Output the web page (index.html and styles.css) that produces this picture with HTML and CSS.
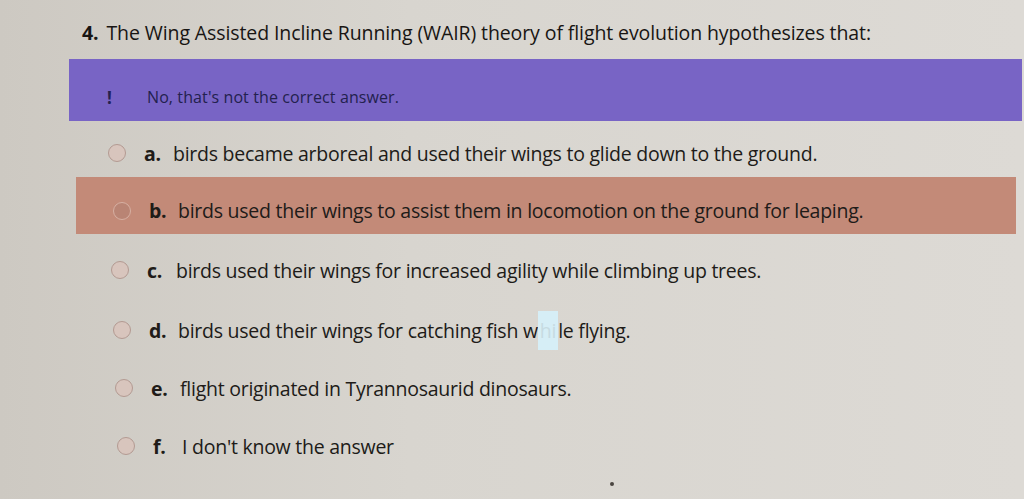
FILE: index.html
```html
<!DOCTYPE html>
<html lang="en">
<head>
    <meta charset="UTF-8">
    <meta name="viewport" content="width=device-width, initial-scale=1.0">
    <title>Question 4</title>
    <link rel="stylesheet" href="styles.css">
</head>
<body>
    <div class="question">
        <h1 class="question-title"><span class="num">4.</span> The Wing Assisted Incline Running (WAIR) theory of flight evolution hypothesizes that:</h1>
        <div class="feedback">
            <span class="bang">!</span>
            <span class="feedback-text">No, that's not the correct answer.</span>
        </div>
        <div class="answers">
            <div class="answer">
                <span class="radio"></span>
                <span class="letter">a.</span>
                <span class="answer-text">birds became arboreal and used their wings to glide down to the ground.</span>
            </div>
            <div class="answer wrong">
                <span class="radio"></span>
                <span class="letter">b.</span>
                <span class="answer-text">birds used their wings to assist them in locomotion on the ground for leaping.</span>
            </div>
            <div class="answer">
                <span class="radio"></span>
                <span class="letter">c.</span>
                <span class="answer-text">birds used their wings for increased agility while climbing up trees.</span>
            </div>
            <div class="answer">
                <span class="radio"></span>
                <span class="letter">d.</span>
                <span class="answer-text">birds used their wings for catching fish w<span class="glare">hi</span>le flying.</span>
            </div>
            <div class="answer">
                <span class="radio"></span>
                <span class="letter">e.</span>
                <span class="answer-text">flight originated in Tyrannosaurid dinosaurs.</span>
            </div>
            <div class="answer">
                <span class="radio"></span>
                <span class="letter">f.</span>
                <span class="answer-text">I don't know the answer</span>
            </div>
        </div>
        <span class="speck"></span>
    </div>
</body>
</html>
```

FILE: styles.css
```css
body {
    margin: 0;
    height: 499px;
    overflow: hidden;
    background: linear-gradient(90deg, #cdc9c2 0%, #d8d5cf 40%, #dddad5 100%);
    font-family: 'Open Sans', 'Liberation Sans', sans-serif;
    color: #231f1c;
}
.question {
    position: relative;
    height: 499px;
    padding-top: 19px;
    box-sizing: border-box;
}
.question-title {
    margin: 0 0 0 82px;
    font-size: 19.5px;
    font-weight: 400;
    line-height: 28px;
    letter-spacing: -0.1px;
    color: #181513;
}
.num {
    font-weight: 700;
    margin-right: 3px;
}
.feedback {
    display: flex;
    align-items: center;
    margin: 12px 2px 0 69px;
    height: 62px;
    background-color: #7864c5;
    padding-left: 38px;
    padding-top: 14px;
    box-sizing: border-box;
    color: #23214e;
}
.bang {
    font-weight: 700;
    font-size: 17px;
    width: 40px;
}
.feedback-text {
    font-size: 16px;
    letter-spacing: 0.1px;
}
.answers {
    display: flex;
    flex-direction: column;
}
.answer {
    display: flex;
    align-items: center;
    height: 58px;
    padding-left: 109px;
    font-size: 19.5px;
    letter-spacing: -0.25px;
    color: #201b18;
}
.answer:first-child {
    height: 56px;
    padding-top: 8px;
    padding-left: 108px;
    box-sizing: border-box;
}
.answer.wrong {
    margin: 0 8px 0 76px;
    padding-left: 37px;
    height: 57px;
    padding-top: 10px;
    box-sizing: border-box;
    background-color: #c38a78;
}
.answer:nth-child(3) { padding-left: 111px; height: 62px; padding-top: 10px; box-sizing: border-box; }
.answer:nth-child(4) { padding-left: 113px; height: 60px; padding-top: 8px; box-sizing: border-box; }
.answer:nth-child(5) { padding-left: 115px; height: 58px; padding-top: 6px; box-sizing: border-box; }
.answer:nth-child(6) { padding-left: 117px; height: 58px; padding-top: 6px; box-sizing: border-box; }
.radio {
    width: 16px;
    height: 16px;
    border-radius: 50%;
    border: 1.5px solid #b39a92;
    background: #d8c5bd;
    margin-right: 18px;
    flex-shrink: 0;
}
.wrong .radio {
    border-color: #d7b0a3;
    background: #b98474;
    margin-right: 18px;
}
.letter {
    font-weight: 700;
    width: 29px;
    flex-shrink: 0;
}
.glare {
    background: #d6eef6;
    color: #c6dbe2;
    padding: 6px 2px;
}
.speck {
    position: absolute;
    left: 610px;
    top: 482px;
    width: 4px;
    height: 4px;
    border-radius: 50%;
    background: #4a4540;
}
```
